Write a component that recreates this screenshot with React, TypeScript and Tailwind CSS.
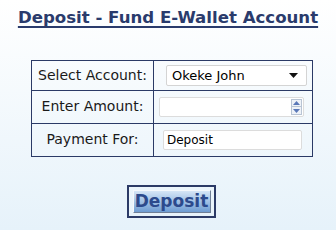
import React from "react";

const LABEL = "text-[14px] text-[#1a1a1a] text-center";

export default function App() {
  return (
    <div className="w-[336px] h-[230px] bg-gradient-to-b from-[#ffffff] to-[#e6f2fa] font-['DejaVu_Sans',Verdana,sans-serif] overflow-hidden">
      <div className="pt-[6px] text-center">
        <span className="text-[16.6px] font-bold text-[#2a3b6c] underline decoration-2 underline-offset-[3px]">
          Deposit - Fund E-Wallet Account
        </span>
      </div>

      <div className="mt-[29px] ml-[31px] w-[282px] border border-[#2b3a66]">
        <div className="grid grid-cols-[122px_1fr] h-[30px] border-b border-[#2b3a66]">
          <div className={`${LABEL} border-r border-[#2b3a66] flex items-center justify-center`}>Select Account:</div>
          <div className="flex items-center pl-[12px]">
            <div className="w-[141px] h-[21px] bg-white border border-[#d4d4d4] rounded-[2px] flex items-center justify-between pl-[5px] pr-[8px] text-[13px] text-black">
              <span>Okeke John</span>
              <svg width="9" height="5" viewBox="0 0 9 5"><path d="M0 0h9L4.5 5z" fill="#111" /></svg>
            </div>
          </div>
        </div>
        <div className="grid grid-cols-[122px_1fr] h-[33px] border-b border-[#2b3a66]">
          <div className={`${LABEL} border-r border-[#2b3a66] flex items-center justify-center`}>Enter Amount:</div>
          <div className="flex items-center pl-[5px]">
            <div className="w-[145px] h-[20px] bg-white border border-[#dcdcdc] rounded-[2px] flex items-center justify-end pr-[1px]">
              <div className="flex flex-col w-[11px] h-[16px] border border-[#b8c4d4] bg-[#eef2f8]">
                <div className="flex-1 flex items-center justify-center border-b border-[#b8c4d4]">
                  <svg width="7" height="4" viewBox="0 0 7 4"><path d="M3.5 0L7 4H0z" fill="#5a78b8" /></svg>
                </div>
                <div className="flex-1 flex items-center justify-center">
                  <svg width="7" height="4" viewBox="0 0 7 4"><path d="M0 0h7L3.5 4z" fill="#5a78b8" /></svg>
                </div>
              </div>
            </div>
          </div>
        </div>
        <div className="grid grid-cols-[122px_1fr] h-[32px]">
          <div className={`${LABEL} border-r border-[#2b3a66] flex items-center justify-center`}>Payment For:</div>
          <div className="flex items-center pl-[9px]">
            <div className="w-[139px] h-[20px] bg-white border border-[#dcdcdc] rounded-[2px] flex items-center pl-[3px] text-[12px] text-black">
              Deposit
            </div>
          </div>
        </div>
      </div>

      <div className="mt-[28px] flex justify-center">
        <div className="ml-[7px] w-[89px] h-[33px] border-2 border-[#2b3a66] flex items-center justify-center">
          <button className="w-[78px] h-[23px] bg-gradient-to-b from-[#d6e6f6] to-[#6e9cd2] border-t border-l border-[#f4f8fc] border-b border-r border-b-[#6f7f96] border-r-[#6f7f96] text-[17px] font-bold text-[#2c4a8c] leading-none">
            Deposit
          </button>
        </div>
      </div>
    </div>
  );
}
